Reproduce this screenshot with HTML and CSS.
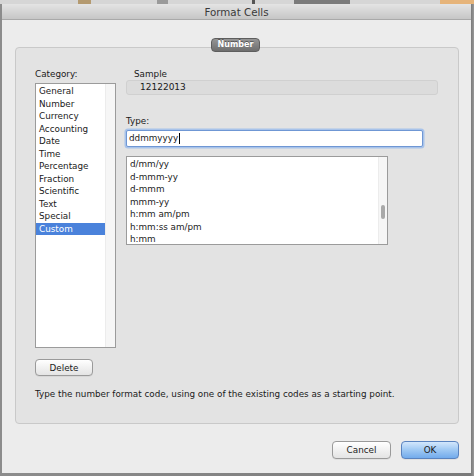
FILE: index.html
```html
<!DOCTYPE html>
<html>
<head>
<meta charset="utf-8">
<link rel="stylesheet" href="styles.css">
</head>
<body>
<div class="desk">
  <div class="strip">
    <span class="blk b1"></span><span class="blk b2"></span><span class="blk b3"></span><span class="blk b4"></span><span class="blk b5"></span>
  </div>
  <div class="window">
    <div class="titlebar">Format Cells</div>
    <div class="content">
      <div class="tabrow"><span class="tab">Number</span></div>
      <div class="group">
        <div class="cols">
          <div class="leftcol">
            <div class="label">Category:</div>
            <div class="list catlist">
              <div class="items">
                <div class="item">General</div>
                <div class="item">Number</div>
                <div class="item">Currency</div>
                <div class="item">Accounting</div>
                <div class="item">Date</div>
                <div class="item">Time</div>
                <div class="item">Percentage</div>
                <div class="item">Fraction</div>
                <div class="item">Scientific</div>
                <div class="item">Text</div>
                <div class="item">Special</div>
                <div class="item sel">Custom</div>
              </div>
              <div class="track"></div>
            </div>
          </div>
          <div class="rightcol">
            <div class="label sample-label">Sample</div>
            <div class="sample">12122013</div>
            <div class="label type-label">Type:</div>
            <div class="typebox">ddmmyyyy<span class="caret"></span></div>
            <div class="list fmtlist">
              <div class="items">
                <div class="item">d/mm/yy</div>
                <div class="item">d-mmm-yy</div>
                <div class="item">d-mmm</div>
                <div class="item">mmm-yy</div>
                <div class="item">h:mm am/pm</div>
                <div class="item">h:mm:ss am/pm</div>
                <div class="item">h:mm</div>
              </div>
              <div class="track"><div class="thumb"></div></div>
            </div>
          </div>
        </div>
        <button class="btn delete">Delete</button>
        <p class="hint">Type the number format code, using one of the existing codes as a starting point.</p>
      </div>
      <div class="actions">
        <button class="btn cancel">Cancel</button>
        <button class="btn ok">OK</button>
      </div>
    </div>
  </div>
</div>
</body>
</html>
```
FILE: styles.css
```css
* { box-sizing: border-box; }
html, body { margin: 0; padding: 0; }
body {
  font-family: "DejaVu Sans", "Liberation Sans", sans-serif;
  font-size: 8.8px;
  color: #1a1a1a;
  background: #8a8a8a;
}
.desk {
  width: 474px;
  height: 476px;
  display: flex;
  flex-direction: column;
  background: linear-gradient(to right, #8c8c8c 0, #8c8c8c 2px, #7a7a7a 471px, #9a9a9a 474px);
  overflow: hidden;
}
.strip {
  height: 4px;
  display: flex;
  background: #d6d6d6;
  flex: none;
}
.blk { display: block; height: 4px; }
.b1 { margin-left: 78px; width: 16px; background: #b49a70; }
.b2 { margin-left: 66px; width: 12px; background: #9a9a9a; }
.b3 { margin-left: 84px; width: 4px; background: #555; }
.b4 { margin-left: 39px; width: 67px; background: #7b7b7b; }
.b5 { margin-left: 90px; width: 40px; background: #e6b47a; }
.window {
  margin-left: 2px;
  width: 469px;
  height: 469px;
  background: #ececec;
  display: flex;
  flex-direction: column;
  flex: none;
}
.titlebar {
  height: 16px;
  line-height: 16px;
  text-align: center;
  font-size: 10.3px;
  color: #3a3a3a;
  background: linear-gradient(#e4e4e4, #c6c6c6);
  border-bottom: 1px solid #a9a9a9;
  flex: none;
}
.content {
  padding: 18px 12px 0 13px;
  display: flex;
  flex-direction: column;
}
.tabrow {
  height: 14px;
  display: flex;
  justify-content: center;
  position: relative;
  z-index: 2;
  padding-right: 3px;
}
.tab {
  width: 49px;
  height: 14px;
  line-height: 12px;
  text-align: center;
  font-weight: bold;
  font-size: 8px;
  color: #fff;
  text-shadow: 0 -1px 0 #555;
  background: linear-gradient(#959595, #6e6e6e);
  border: 1px solid #5e5e5e;
  border-radius: 4px;
}
.group {
  margin-top: -5px;
  height: 377px;
  background: #e3e3e3;
  border: 1px solid #c9c9c9;
  border-radius: 4px;
  padding: 20px 0 0 19px;
  display: flex;
  flex-direction: column;
}
.cols {
  display: flex;
  gap: 10px;
}
.leftcol { width: 81px; display: flex; flex-direction: column; }
.rightcol { width: 312px; display: flex; flex-direction: column; }
.label { height: 12px; line-height: 12px; }
.list {
  background: #fff;
  border: 1px solid #9b9b9b;
  display: flex;
}
.items { flex: 1; padding-top: 1px; }
.item {
  height: 12.5px;
  line-height: 12.5px;
  padding-left: 3px;
  white-space: nowrap;
}
.item.sel { background: #4a82db; color: #fff; }
.track {
  width: 10px;
  background: #f6f6f6;
  border-left: 1px solid #ececec;
}
.catlist { margin-top: 3px; height: 265px; }
.sample-label { padding-left: 8px; }
.sample {
  height: 15px;
  line-height: 13px;
  padding-left: 13px;
  background: #dcdcdc;
  border: 1px solid #d0d0d0;
  border-radius: 3px;
  font-size: 9px;
}
.type-label { margin-top: 20px; }
.typebox {
  margin-top: 3px;
  width: 297px;
  height: 17px;
  line-height: 13px;
  padding-left: 2px;
  background: #fff;
  border: 1px solid #6f97d4;
  box-shadow: 0 0 0 1.5px #a8c3ea;
  border-radius: 2px;
  display: flex;
  align-items: center;
}
.caret {
  display: inline-block;
  width: 1px;
  height: 11px;
  background: #000;
  margin-left: 0.5px;
}
.fmtlist { margin-top: 9px; width: 262px; height: 89px; }
.fmtlist .track { width: 9px; }
.thumb {
  margin-top: 48px;
  margin-left: 2px;
  width: 4px;
  height: 14px;
  border-radius: 2px;
  background: #a9a9a9;
}
.btn {
  font-family: "DejaVu Sans", "Liberation Sans", sans-serif;
  font-size: 8.8px;
  color: #1a1a1a;
  height: 17px;
  padding: 0;
  border: 1px solid #9a9a9a;
  border-radius: 4px;
  background: linear-gradient(#ffffff, #f1f1f1 50%, #e4e4e4);
  box-shadow: 0 0.5px 0 rgba(0,0,0,0.1);
}
.delete { margin-top: 11px; width: 58px; }
.hint { margin: 12px 0 0; height: 12px; line-height: 12px; }
.actions {
  margin-top: 17px;
  display: flex;
  justify-content: flex-end;
  gap: 10px;
}
.actions .btn { height: 18px; }
.cancel { width: 59px; }
.ok {
  width: 58px;
  border-color: #5a83bf;
  background: linear-gradient(#d3e7fc, #9ec8f3 50%, #72abec);
}
```
